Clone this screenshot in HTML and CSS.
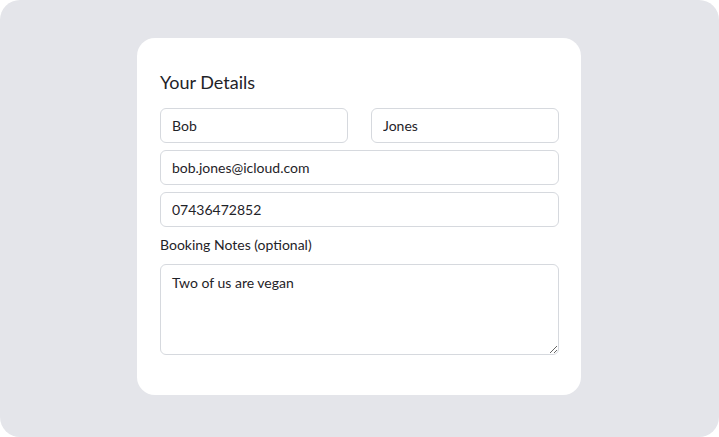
FILE: index.html
```html
<!DOCTYPE html>
<html>
<head>
<meta charset="utf-8">
<link rel="stylesheet" href="styles.css">
</head>
<body>
<div class="frame">
  <form class="card">
    <h2 class="title">Your Details</h2>
    <div class="row">
      <input class="field" type="text" value="Bob">
      <input class="field" type="text" value="Jones">
    </div>
    <input class="field" type="email" value="bob.jones@icloud.com">
    <input class="field" type="tel" value="07436472852">
    <label class="label">Booking Notes (optional)</label>
    <textarea class="notes">Two of us are vegan</textarea>
  </form>
</div>
</body>
</html>
```
FILE: styles.css
```css
html, body {
  margin: 0;
  padding: 0;
  background: #ffffff;
}
.frame {
  width: 719px;
  height: 437px;
  background: #e4e5ea;
  border-radius: 20px;
  display: flex;
  justify-content: flex-start;
  align-items: flex-start;
  padding: 38px 0 0 137px;
  box-sizing: border-box;
  font-family: Lato, "Noto Sans", sans-serif;
  color: #1f2328;
}
.card {
  width: 444px;
  box-sizing: border-box;
  background: #ffffff;
  border-radius: 18px;
  padding: 32px 22px 40px 23px;
  display: flex;
  flex-direction: column;
  gap: 7px;
}
.title {
  margin: 0 0 7px 0;
  font-size: 18px;
  line-height: 24px;
  font-weight: 400;
  color: #1f2328;
}
.row {
  display: flex;
  gap: 23px;
}
.row .field {
  flex: 1;
  min-width: 0;
}
.field, .notes {
  font-family: inherit;
  font-size: 14px;
  color: #1f2328;
  border: 1px solid #d6d9de;
  border-radius: 6px;
  background: #ffffff;
  box-sizing: border-box;
  outline: none;
}
.field {
  height: 35px;
  padding: 0 11px;
}
.label {
  font-size: 14px;
  line-height: 20px;
  margin: 1px 0 2px;
}
.notes {
  height: 91px;
  padding: 8px 11px;
  resize: vertical;
  line-height: 20px;
}
```
